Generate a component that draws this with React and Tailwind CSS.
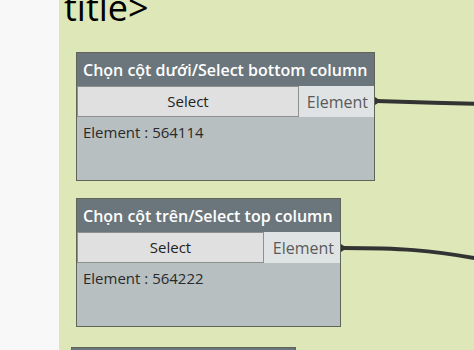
import React from "react";

const OS = { fontFamily: '"Open Sans", sans-serif' };

function Node({ title, width, value, selectW }) {
  return (
    <div className="border border-[#5f6659] flex flex-col shrink-0" style={{ width }}>
      <div className="h-[33px] shrink-0 bg-[#6b767c] text-white font-semibold text-[16px] leading-none flex items-center pl-[6px] whitespace-nowrap" style={OS}>
        {title}
      </div>
      <div className="flex h-[31px] shrink-0">
        <div className="h-full bg-[#e0e0e0] border border-[#8f8f8f] flex items-center justify-center text-[15px] text-[#222]" style={{ width: selectW, ...OS }}>
          Select
        </div>
        <div className="flex-1 h-full bg-[#dfe3e4] flex items-center justify-end pr-[6px] text-[16px] text-[#5a5a5a]" style={OS}>
          Element
        </div>
      </div>
      <div className="h-[63px] shrink-0 bg-[#b7bfc1] pl-[6px] pt-[4px] text-[15px] text-[#2a2a2a]" style={OS}>
        {value}
      </div>
    </div>
  );
}

export default function App() {
  return (
    <div className="w-[474px] h-[350px] overflow-hidden flex bg-[#dde7b7]">
      <div className="w-[59px] h-full bg-[#f8f8f8] shrink-0" />
      <div className="relative flex-1 h-full flex flex-col">
        <div className="text-[36px] leading-none text-black mt-[-10px] pl-[5px] h-[54px] shrink-0 whitespace-nowrap" style={OS}>
          title&gt;
        </div>
        <div className="ml-[17px] mt-[8px] shrink-0">
          <Node title="Chọn cột dưới/Select bottom column" width={299} selectW={222} value="Element : 564114" />
        </div>
        <div className="ml-[17px] mt-[17px] shrink-0">
          <Node title="Chọn cột trên/Select top column" width={265} selectW={187} value="Element : 564222" />
        </div>
        <div className="ml-[12px] mt-[20px] w-[225px] h-[20px] shrink-0 bg-[#6b767c] border border-[#5f6659]" />
        <svg className="absolute left-0 top-0" width="415" height="350" viewBox="59 0 415 350">
          <path d="M376 101 C 420 102, 440 103, 480 104" stroke="#333" strokeWidth="4" fill="none" />
          <path d="M375 97 L381 101 L375 105 Z" fill="#333" />
          <path d="M342 248 C 400 248, 430 250, 480 259" stroke="#333" strokeWidth="4" fill="none" />
          <path d="M341 244 L347 248 L341 252 Z" fill="#333" />
        </svg>
      </div>
    </div>
  );
}
